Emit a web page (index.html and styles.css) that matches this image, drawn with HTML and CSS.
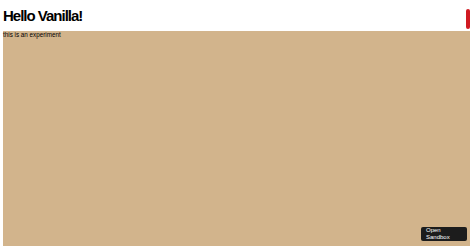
FILE: index.html
```html
<!DOCTYPE html>
<html>
<head>
<meta charset="utf-8">
<link rel="stylesheet" href="styles.css">
</head>
<body>
<header class="top">
  <h1 class="title">Hello Vanilla!</h1>
  <span class="redbar"></span>
</header>
<main class="stage">
  <div class="text">this is an experiment</div>
  <a class="sandbox">Open<br>Sandbox</a>
</main>
</body>
</html>
```
FILE: styles.css
```css
html, body { margin: 0; padding: 0; }
body {
  width: 474px;
  height: 248px;
  background: #fff;
  font-family: "Liberation Sans", Arial, sans-serif;
  overflow: hidden;
  display: flex;
  flex-direction: column;
  padding: 0 4px 2px 3px;
  box-sizing: border-box;
}
.top {
  height: 31px;
  display: flex;
  align-items: center;
  justify-content: space-between;
  flex: none;
}
.title {
  margin: 0;
  font-size: 15px;
  letter-spacing: -1px;
  font-weight: bold;
  color: #000;
}
.redbar {
  width: 4px;
  height: 20px;
  background: #d01a22;
  border-radius: 2px;
  align-self: flex-end;
  margin-bottom: 2px;
}
.stage {
  flex: 1;
  background: #d2b48c;
  position: relative;
}
.text {
  font-size: 6.3px;
  color: #000;
  line-height: 8px;
}
.sandbox {
  position: absolute;
  right: 3px;
  bottom: 5px;
  width: 46px;
  height: 14px;
  padding: 0 5px;
  box-sizing: border-box;
  background: #1c1c1c;
  color: #fff;
  font-size: 6px;
  line-height: 7px;
  border-radius: 2px;
}
```
